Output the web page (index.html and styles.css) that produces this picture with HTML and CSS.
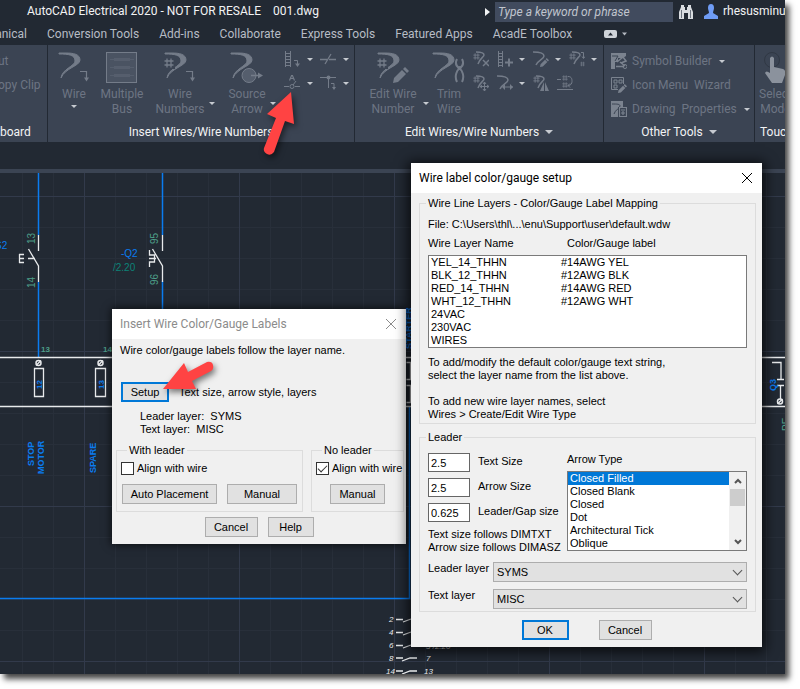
FILE: index.html
```html
<!DOCTYPE html>
<html lang="en">
<head>
<meta charset="utf-8">
<title>AutoCAD Electrical 2020</title>
<link rel="stylesheet" href="styles.css">
</head>
<body>
<svg class="defs" aria-hidden="true">
  <defs>
    <symbol id="wire" viewBox="0 0 32 32"><path d="M1 2h7c7 0 14 1 14 7 0 6-15 8-19 18 1-9 14-12 14-17 0-6-6-7-16-7z" fill="currentColor" stroke="currentColor" stroke-width="1"/></symbol>
    <symbol id="hash" viewBox="0 0 10 10"><path d="M3 .5v9M7 .5v9M.5 3h9M.5 7h9" fill="none" stroke="currentColor" stroke-width="1.3"/></symbol>
    <symbol id="pencil" viewBox="0 0 16 16"><path d="M0 16l1-5 8-8 4 4-8 8zM10 2l2-2 4 4-2 2z" fill="currentColor"/></symbol>
    <symbol id="down" viewBox="0 0 10 12"><path d="M0 1.500h6.500V8" fill="none" stroke="currentColor" stroke-width="1.200"/><path d="M4 7.500h5l-2.500 4z" fill="currentColor"/></symbol>
  </defs>
</svg>
<div class="app">
  <header class="titlebar">
    <span class="product">AutoCAD Electrical 2020 - NOT FOR RESALE</span>
    <span class="document">001.dwg</span>
    <span class="search-caret"></span>
    <input class="search" type="text" placeholder="Type a keyword or phrase" aria-label="Search">
    <svg class="binoculars" width="14" height="14" viewBox="0 0 14 14"><path d="M2 0h3v2h1v3h2V2h1V0h3v2l2 5v7H9V8H5v6H0V7l2-5z" fill="#d9dce0"/><path d="M2.500 5v8M11.500 5v8" stroke="#6d747f"/></svg>
    <svg class="avatar" width="14" height="15" viewBox="0 0 14 15"><path d="M4 4a3 4 0 0 1 6 0c0 2-1 3-1 5l5 3v3H0v-3l5-3C5 7 4 6 4 4z" fill="#6f9cf5"/></svg>
    <span class="user">rhesusminus</span>
  </header>
  <nav class="tabs">
    <a class="first" href="#mechanical">anical</a>
    <a href="#conversion">Conversion Tools</a>
    <a href="#addins">Add-ins</a>
    <a href="#collaborate">Collaborate</a>
    <a href="#express">Express Tools</a>
    <a href="#featured">Featured Apps</a>
    <a href="#acade">AcadE Toolbox</a>
    <button class="minimize" type="button" aria-label="Minimize ribbon"><svg width="23" height="8" viewBox="0 0 23 8"><rect width="13" height="8" rx="2" fill="#cfd3d9"/><path d="M4 5.500l2.500-3 2.500 3z" fill="#222933"/><path d="M18 2.500h5l-2.500 3z" fill="#b5bac2"/></svg></button>
  </nav>
  <section class="ribbon">
    <div class="panel clipboard">
      <div class="tools stack"><button type="button">ut</button><button type="button">opy Clip</button></div>
      <div class="panel-title">board</div>
    </div>
    <div class="panel insert">
      <div class="tools">
        <button class="big wire" type="button"><svg width="32" height="32" viewBox="0 0 32 32"><use href="#wire" width="32" height="32"/><use href="#down" x="22" y="19" width="10" height="12"/></svg><span>Wire</span><i class="caret"></i></button>
        <button class="big bus" type="button"><svg width="32" height="32" viewBox="0 0 32 32"><rect x=".5" y="1.500" width="30" height="30" fill="#4a5362" stroke="currentColor"/><path d="M8 8.500h16M8 16.500h16M8 24.500h16" stroke="#626b79" stroke-width="2"/><path d="M4 8.500h24M4 16.500h24M4 24.500h24" stroke="#555e6d"/></svg><span>Multiple<br>Bus</span></button>
        <button class="big numbers" type="button"><svg width="32" height="32" viewBox="0 0 32 32"><use href="#wire" width="32" height="32"/><rect y="6" width="11" height="12" fill="#3b4453"/><use href="#hash" y="7" width="10" height="10"/><use href="#down" x="22" y="19" width="10" height="12"/></svg><span>Wire<br>Numbers</span></button>
        <i class="caret low"></i>
        <button class="big source" type="button"><svg width="34" height="32" viewBox="0 0 34 32"><use href="#wire" width="32" height="32"/><circle cx="19" cy="24.500" r="7" fill="#555e6d" stroke="currentColor"/><path d="M21 24.500h9" stroke="currentColor" stroke-width="1.500"/><path d="M28 21.500l5 3-5 3z" fill="currentColor"/></svg><span>Source<br>Arrow</span></button>
        <i class="caret low"></i>
        <div class="small-grid insert-grid">
          <button type="button" aria-label="Ladder"><svg width="16" height="16" viewBox="0 0 16 16"><path d="M1.500 0v16M6.500 0v16M1 2.500h6M1 5.500h6M1 8.500h6M1 11.500h6M1 14.500h6" stroke="currentColor"/><path d="M10 9.500h3.500v4" fill="none" stroke="currentColor"/><path d="M11 12.500h5l-2.500 3.500z" fill="currentColor"/></svg></button><i class="caret"></i>
          <button type="button" aria-label="Wire gap"><svg width="16" height="16" viewBox="0 0 16 16"><path d="M0 8.500h7M9 8.500h7M5 13l6-10" stroke="currentColor" stroke-width="1.300"/></svg></button><i class="caret"></i>
          <button type="button" aria-label="Wire color labels"><svg width="16" height="16" viewBox="0 0 16 16"><path d="M5.500 5.500l2.500-6 2.500 6M6 3.500h4M0 11.500h5M11 11.500h5" fill="none" stroke="currentColor" stroke-width="1.200"/><circle cx="8" cy="11.500" r="2" fill="none" stroke="currentColor"/><path d="M9 10l3-4" stroke="currentColor"/></svg></button><i class="caret"></i>
          <button type="button" aria-label="Tee marker"><svg width="16" height="16" viewBox="0 0 16 16"><path d="M0 2.500h16M8.500 3v10M11 8.500h3v4" fill="none" stroke="currentColor"/><circle cx="8.500" cy="2.500" r="2" fill="currentColor"/><path d="M12 12h4l-2 3z" fill="currentColor"/></svg></button><i class="caret"></i>
        </div>
      </div>
      <div class="panel-title">Insert Wires/Wire Numbers</div>
    </div>
    <div class="panel edit">
      <div class="tools">
        <button class="big editnum" type="button"><svg width="32" height="32" viewBox="0 0 32 32"><use href="#wire" width="32" height="32"/><rect y="6" width="11" height="12" fill="#3b4453"/><use href="#hash" y="7" width="10" height="10"/><use href="#pencil" x="16" y="16" width="16" height="16"/></svg><span>Edit Wire<br>Number</span></button>
        <i class="caret low"></i>
        <button class="big trim" type="button"><svg width="34" height="32" viewBox="0 0 34 32"><use href="#wire" width="32" height="32"/><path d="M25 8c-2 4-1 7 2 9s6 8 3 14M30 8c2 4 1 7-2 9s-6 8-3 14" fill="none" stroke="currentColor" stroke-width="2"/><circle cx="27.500" cy="17" r="2" fill="currentColor"/></svg><span>Trim<br>Wire</span></button>
        <div class="edit-rows">
          <div class="small-row">
            <button type="button" aria-label="Delete wire numbers"><svg width="16" height="16" viewBox="0 0 16 16"><path d="M3 1c5 0 8 1 8 3s-4 3-6 9" fill="none" stroke="currentColor" stroke-width="1.500"/><use href="#hash" y="2" width="7" height="7"/><path d="M10 9l6 6M16 9l-6 6" stroke="currentColor" stroke-width="1.500"/></svg></button>
            <button class="gap" type="button" aria-label="Add rung"><svg width="16" height="16" viewBox="0 0 16 16"><path d="M1.500 0v16M5.500 0v16M1 2.500h5M1 5.500h5M1 8.500h5M1 11.500h5M1 14.500h5" stroke="currentColor"/><path d="M8 11.500h8M12 7.500v8" stroke="currentColor" stroke-width="2"/></svg></button><i class="caret"></i>
            <button class="gap" type="button" aria-label="Edit wire type"><svg width="16" height="16" viewBox="0 0 16 16"><path d="M0 1c8 0 11 1 11 4s-6 4-8 9" fill="none" stroke="currentColor" stroke-width="1.500"/><use href="#pencil" x="7" y="7" width="9" height="9"/></svg></button><i class="caret"></i>
            <button class="gap" type="button" aria-label="Copy wire number"><svg width="16" height="16" viewBox="0 0 16 16"><path d="M3 1c5 0 8 1 8 3s-4 3-6 9" fill="none" stroke="currentColor" stroke-width="1.500"/><use href="#hash" y="2" width="7" height="7"/><use href="#hash" x="11" y="10" width="5" height="6"/><path d="M12 1.500h2.500V7M13 5.500l1.500 2 1.500-2" fill="none" stroke="currentColor"/></svg></button><i class="caret"></i>
          </div>
          <div class="small-row">
            <button type="button" aria-label="Move wire number"><svg width="16" height="16" viewBox="0 0 16 16"><path d="M3 1c5 0 8 1 8 3s-4 3-6 9" fill="none" stroke="currentColor" stroke-width="1.500"/><use href="#hash" y="1" width="7" height="7"/><path d="M7 11.500h9M11.500 7v9M10 9l1.500-2L13 9M10 14l1.500 2 1.500-2M9 10l-2 1.500L9 13M14 10l2 1.500-2 1.500" fill="none" stroke="currentColor"/></svg></button>
            <button class="gap" type="button" aria-label="Stretch wire"><svg width="16" height="16" viewBox="0 0 16 16"><path d="M0 1c8 0 11 1 11 4s-6 4-8 9" fill="none" stroke="currentColor" stroke-width="1.500"/><path d="M6 12h10" stroke="currentColor"/><path d="M5 12l3-3v6zM16 12l-3-3v6z" fill="currentColor"/></svg></button><i class="caret"></i>
            <button class="gap" type="button" aria-label="Flip wire number"><svg width="16" height="16" viewBox="0 0 16 16"><path d="M3 1c5 0 8 1 8 3s-4 3-6 9" fill="none" stroke="currentColor" stroke-width="1.500"/><use href="#hash" y="1" width="7" height="7"/><path d="M11 7v9H7zM12 7v9h4z" fill="currentColor"/></svg></button>
            <button class="gap" type="button" aria-label="Toggle wire number"><svg width="16" height="16" viewBox="0 0 16 16"><path d="M0 4.500h4M0 14.500h16M11 1.500c4 0 4 3 4 5s-1 4-4 4M13 8.500l-2 2 2 2" fill="none" stroke="currentColor"/><use href="#hash" x="5" y="0" width="6" height="6"/><use href="#hash" x="5" y="7" width="6" height="6"/></svg></button>
          </div>
        </div>
      </div>
      <div class="panel-title">Edit Wires/Wire Numbers<i class="caret wide"></i></div>
    </div>
    <div class="panel other">
      <div class="tools stack">
        <button type="button"><svg width="16" height="16" viewBox="0 0 16 16"><path d="M0 0h15v3l-3 2H7v4H4v7H0z" fill="currentColor"/><path d="M1 3h6l-3 5" fill="none" stroke="#3b4453"/><path d="M6 9l6-5 3 4-5 2M5 13.500h8M9 9l5 4" fill="none" stroke="currentColor" stroke-width="1.500"/><circle cx="14" cy="13.500" r="2" fill="none" stroke="currentColor"/></svg>Symbol Builder<i class="caret"></i></button>
        <button type="button"><svg width="16" height="16" viewBox="0 0 16 16"><path d="M.5.5h12v12H.5zM3 3h3v3H3zM8 3h3v3H8zM3 8h3v3H3z" fill="none" stroke="currentColor"/><rect x="7" y="7" width="9" height="9" fill="#3b4453"/><use href="#pencil" x="7" y="7" width="9" height="9"/></svg>Icon Menu&nbsp; Wizard</button>
        <button type="button"><svg width="16" height="16" viewBox="0 0 16 16"><path d="M0 0h12v6H7v10H0z" fill="currentColor"/><path d="M1 3c5 0 8 0 8 2S4 9 3 13" fill="none" stroke="#3b4453"/><path d="M8.500 6.500h7v9h-7zM10 9h4M10 12h4M12 10v4" fill="none" stroke="currentColor" stroke-width="1.200"/></svg>Drawing&nbsp; Properties<i class="caret"></i></button>
      </div>
      <div class="panel-title">Other Tools<i class="caret wide"></i></div>
    </div>
    <div class="panel touch">
      <div class="tools"><button class="big select-mode" type="button"><svg width="32" height="32" viewBox="0 0 32 32"><circle cx="13" cy="9" r="7.500" fill="none" stroke="#303844"/><path d="M11 7q2-3 4 0v9l9 2q3 1 2 6l-3 8H13l-7-10q1-3 5 0z" fill="#8b929d"/></svg><span>Select<br>Mode</span></button></div>
      <div class="panel-title">Touch</div>
    </div>
  </section>
  <main class="workspace">
    <svg class="drawing" role="img" aria-label="Wiring schematic">
      <defs>
        <pattern id="minor" x="84" y="23" width="31" height="31" patternUnits="userSpaceOnUse"><path d="M.5 0v31M0 .5h31" stroke="#282f3a"/></pattern>
        <pattern id="major" x="84" y="23" width="155" height="155" patternUnits="userSpaceOnUse"><path d="M.5 0v155M0 .5h155" stroke="#323a4b"/></pattern>
      </defs>
      <rect width="100%" height="100%" fill="url(#minor)"/>
      <rect width="100%" height="100%" fill="url(#major)"/>
      <g transform="translate(0 -173)">
        <path class="blue" d="M38.500 173v62M38.500 282v75M162.500 173v62M162.500 281v40M0 598.500h410M409.500 406v193"/>
        <path class="white" d="M38.500 235v16M28.500 249l10 17v16M19.500 254v9M19 254.500h5M19 258.500h5M19 262.500h5M28 258.500h7M162.500 235v16M152.500 249l10 17v16M149.500 250v5h5v7h-5v5M149 258.500h7M0 357.500h785M0 406.500h785M34.500 368.500h9v28h-9zM95.500 368.500h10v28h-10zM406.500 362.500h4v17h-4M406.500 385.500h4v17h-4"/>
        <path class="white" d="M396 619.500h7M403 622l8-3M396 632.500h7M403 635l8-3M396 645.500h7M403 648l8-3M396 658h7M402 661l8-3h7M396 671h7M402 674l8-3h7M772 362.500h9v17M777 379.500h7M777 385.500h7M780.500 385v14"/>
        <g class="terminal"><circle cx="38.500" cy="363" r="2.500"/><circle cx="100.500" cy="363" r="2.500"/><circle cx="780" cy="401.500" r="2.500"/><path d="M36 365.500l5-5M98 365.500l5-5M777.500 404l5-5"/></g>
        <g class="cad blue-text">
          <text x="-5" y="249">S2</text><text x="121" y="257">-Q2</text>
          <text class="tiny" transform="translate(42 389) rotate(-90)">12</text><text class="tiny" transform="translate(104 389) rotate(-90)">13</text>
          <text class="narrow" transform="translate(34 466) rotate(-90)">STOP</text><text class="narrow" transform="translate(44 474) rotate(-90)">MOTOR</text><text class="narrow" transform="translate(96 473) rotate(-90)">SPARE</text>
          <text class="narrow" transform="translate(412 349) rotate(-90)">STARTER</text><text class="narrow" transform="translate(776 391) rotate(-90)">Q3</text>
        </g>
        <g class="cad green-text">
          <text class="deep" x="113" y="271">/2.20</text>
          <text transform="translate(35 244) rotate(-90)">13</text><text transform="translate(35 288) rotate(-90)">14</text>
          <text transform="translate(158 244) rotate(-90)">95</text><text transform="translate(158 285) rotate(-90)">96</text>
          <text class="tiny" x="41" y="352">13</text><text class="tiny" x="103" y="352">14</text><text transform="translate(790 431) rotate(-90)">PE</text>
        </g>
        <g class="cad white-text">
          <text x="389" y="622">2</text><text x="389" y="635">4</text><text x="389" y="648">6</text><text x="389" y="661">8</text><text x="386" y="674">14</text>
          <text x="426" y="649">5 /2.20</text><text x="426" y="661">7</text><text x="424" y="674">13</text>
        </g>
      </g>
    </svg>
  </main>

  <section class="dialog labels-dialog" role="dialog" aria-labelledby="labels-title">
    <header class="dialog-bar"><h2 id="labels-title">Insert Wire Color/Gauge Labels</h2><button class="close" type="button" aria-label="Close"><svg width="12" height="12" viewBox="0 0 12 12"><path d="M1 1l10 10M11 1L1 11" stroke="currentColor"/></svg></button></header>
    <form class="labels-body">
      <p>Wire color/gauge labels follow the layer name.</p>
      <div class="setup-row"><button class="btn primary" type="button">Setup</button><span>Text size, arrow style, layers</span></div>
      <p class="layers">Leader layer:&nbsp; SYMS<br>Text layer:&nbsp; MISC</p>
      <div class="groups">
        <fieldset class="with-leader"><legend>With leader</legend>
          <label class="check"><input type="checkbox">Align with wire</label>
          <div class="buttons"><button class="btn auto" type="button">Auto Placement</button><button class="btn manual" type="button">Manual</button></div>
        </fieldset>
        <fieldset class="no-leader"><legend>No leader</legend>
          <label class="check"><input type="checkbox" checked>Align with wire</label>
          <div class="buttons"><button class="btn" type="button">Manual</button></div>
        </fieldset>
      </div>
      <div class="actions"><button class="btn" type="button">Cancel</button><button class="btn help" type="button">Help</button></div>
    </form>
  </section>

  <section class="dialog setup-dialog" role="dialog" aria-labelledby="setup-title">
    <header class="dialog-bar"><h2 id="setup-title">Wire label color/gauge setup</h2><button class="close" type="button" aria-label="Close"><svg width="12" height="12" viewBox="0 0 12 12"><path d="M1 1l10 10M11 1L1 11" stroke="currentColor"/></svg></button></header>
    <form class="setup-body">
      <fieldset class="mapping"><legend>Wire Line Layers - Color/Gauge Label Mapping</legend>
        <p>File: C:\Users\thl\...\enu\Support\user\default.wdw</p>
        <table>
          <thead><tr><th>Wire Layer Name</th><th>Color/Gauge label</th></tr></thead>
          <tbody>
            <tr><td>YEL_14_THHN</td><td>#14AWG YEL</td></tr>
            <tr><td>BLK_12_THHN</td><td>#12AWG BLK</td></tr>
            <tr><td>RED_14_THHN</td><td>#14AWG RED</td></tr>
            <tr><td>WHT_12_THHN</td><td>#12AWG WHT</td></tr>
            <tr><td>24VAC</td><td></td></tr>
            <tr><td>230VAC</td><td></td></tr>
            <tr><td>WIRES</td><td></td></tr>
          </tbody>
        </table>
        <p class="hint">To add/modify the default color/gauge text string,<br>select the layer name from the list above.</p>
        <p class="hint">To add new wire layer names, select<br>Wires &gt; Create/Edit Wire Type</p>
      </fieldset>
      <fieldset class="leader"><legend>Leader</legend>
        <div class="leader-top">
          <div class="sizes">
            <div class="size"><input id="text-size" type="text" value="2.5"><label for="text-size">Text Size</label></div>
            <div class="size"><input id="arrow-size" type="text" value="2.5"><label for="arrow-size">Arrow Size</label></div>
            <div class="size"><input id="gap-size" type="text" value="0.625"><label for="gap-size">Leader/Gap size</label></div>
            <p>Text size follows DIMTXT<br>Arrow size follows DIMASZ</p>
          </div>
          <div class="arrow-type">
            <label for="arrow-type">Arrow Type</label>
            <div class="listbox">
              <select id="arrow-type" size="6"><option selected>Closed Filled</option><option>Closed Blank</option><option>Closed</option><option>Dot</option><option>Architectural Tick</option><option>Oblique</option></select>
              <div class="scrollbar"><svg width="8" height="6" viewBox="0 0 8 6"><path d="M1 5l3-3 3 3" fill="none" stroke="#555" stroke-width="2"/></svg><i></i><svg width="8" height="6" viewBox="0 0 8 6"><path d="M1 1l3 3 3-3" fill="none" stroke="#555" stroke-width="2"/></svg></div>
            </div>
          </div>
        </div>
        <div class="layer-row"><label for="leader-layer">Leader layer</label><span class="dropdown"><select id="leader-layer"><option>SYMS</option></select></span></div>
        <div class="layer-row"><label for="text-layer">Text layer</label><span class="dropdown"><select id="text-layer"><option>MISC</option></select></span></div>
      </fieldset>
      <div class="actions"><button class="btn primary ok" type="button">OK</button><button class="btn" type="button">Cancel</button></div>
    </form>
  </section>

  <svg class="pointer ribbon-pointer" width="44" height="76" viewBox="260 86 44 76" aria-hidden="true"><path d="M291 92l3 32-9-3-11 31q-3 4-7 2t-3-6l12-30-9-4z"/></svg>
  <svg class="pointer setup-pointer" width="60" height="42" viewBox="160 356 60 42" aria-hidden="true"><path d="M163 389l21-26 4 9 19-10q5-1 6 3t-2 6l-19 10 4 8z"/></svg>
</div>
</body>
</html>
```

FILE: styles.css
```css
* { box-sizing: border-box; }

:root {
  --dark: #222933;
  --panel: #3b4453;
  --disabled: #6d7583;
  --ui: Roboto, "Open Sans", sans-serif;
  --classic: "Liberation Sans", Arial, sans-serif;
}

body {
  margin: 0;
  min-height: 100vh;
  padding: 0 15px 15px 0;
  display: flex;
  background: #fff;
  font: 12px/15px var(--ui);
}

button, input, select { font: inherit; color: inherit; margin: 0; padding: 0; border: 0; border-radius: 0; background: none; }
p, h2 { margin: 0; font-size: inherit; font-weight: normal; }
.defs { position: absolute; width: 0; height: 0; }

.app {
  position: relative;
  flex: 1;
  min-width: 0;
  display: flex;
  flex-direction: column;
  background: var(--dark);
  color: #e6e8eb;
  box-shadow: 4px 5px 6px #444;
}

/* Title bar */
.titlebar { display: flex; align-items: center; height: 23px; padding-left: 27px; overflow: hidden; white-space: nowrap; color: #f2f3f4; }
.document { margin-left: 12px; flex: 1; }
.search-caret { border: 4px solid transparent; border-left: 5px solid #f2f3f4; border-right: 0; margin-right: 5px; }
.search { width: 178px; height: 20px; padding-left: 3px; background: #414b5e; }
.search::placeholder { color: #c0c5ce; font-style: italic; opacity: 1; }
.binoculars { margin-left: 6px; }
.avatar { margin: 0 5px 0 11px; }
.user { width: 62px; overflow: hidden; }

/* Ribbon tabs */
.tabs { display: flex; align-items: center; gap: 20px; height: 22px; color: #b7bcc5; white-space: nowrap; }
.tabs a { color: inherit; text-decoration: none; }
.tabs .first { display: flex; justify-content: flex-end; width: 27px; }
.minimize { display: flex; margin-left: 12px; }

/* Ribbon */
.ribbon { display: flex; gap: 1px; height: 97px; overflow: hidden; color: var(--disabled); white-space: nowrap; }
.panel { display: flex; flex-direction: column; flex: none; background: var(--panel); overflow: hidden; }
.panel button { text-align: center; }
.clipboard { width: 47px; }
.insert { width: 306px; }
.edit { width: 248px; }
.other { width: 150px; }
.touch { flex: 1; }
.tools { display: flex; flex: 1; align-items: flex-start; padding-top: 6px; }
.panel-title { display: flex; align-items: center; justify-content: center; height: 20px; color: #f2f3f4; }
.clipboard .panel-title { justify-content: flex-start; }
.touch .panel-title { justify-content: flex-start; padding-left: 5px; }

.caret { flex: none; display: block; border: 3px solid transparent; border-top: 3px solid #c6cad0; border-bottom: 0; }
.caret.low { margin-top: 51px; }
.caret.wide { border-width: 4px; border-bottom: 0; margin-left: 6px; }

.big { display: flex; flex-direction: column; align-items: center; flex: none; }
.big svg { margin-bottom: 4px; color: #747c89; }
.big .caret { margin-top: 3px; }
.wire { width: 52px; }
.bus { width: 44px; }
.numbers { width: 64px; margin-left: 4px; }
.insert .numbers + .caret { margin-left: -3px; }
.source { width: 50px; margin-left: 7px; }
.insert .source + .caret { margin-left: -2px; }
.editnum { width: 60px; margin-left: 8px; }
.trim { width: 38px; margin-left: 1px; }
.select-mode { margin-left: 4px; }

.small-grid { display: grid; grid-template-columns: 16px 6px 16px 6px; column-gap: 7px; row-gap: 8px; align-items: center; margin-left: 8px; }
.small-grid svg, .small-row svg { display: block; color: #747c89; }
.edit-rows { display: grid; row-gap: 8px; margin-left: 5px; }
.small-row { display: flex; align-items: center; }
.small-row .gap { margin-left: 8px; }
.small-row .caret { margin-left: 6px; }
.small-row .caret + .gap { margin-left: 8px; }

.stack { flex-direction: column; gap: 8px; padding-top: 8px; }
.stack button { display: flex; align-items: center; height: 16px; }
.clipboard .stack { margin-left: -2px; }
.other .stack { padding-left: 7px; }
.other .stack svg { margin-right: 5px; color: #7b838f; }
.other .stack .caret { margin-left: 7px; }

/* Drawing area */
.workspace { flex: 1; display: flex; margin-top: 27px; border-top: 4px solid var(--panel); overflow: hidden; }
.drawing { width: 100%; flex: 1; }
.blue { fill: none; stroke: #0a7cf0; stroke-width: 1.5; }
.white { fill: none; stroke: #e8eaec; stroke-width: 1.3; }
.terminal { fill: none; stroke: #e8eaec; stroke-width: 1.5; }
.cad { font: 10px "Liberation Sans", sans-serif; }
.tiny { font-size: 8px; font-weight: bold; }
.narrow { font-size: 9px; font-weight: bold; }
.blue-text { fill: #0a7cf0; }
.green-text { fill: #4d9e88; }
.green-text .deep { fill: #0c8378; }
.white-text { fill: #e8eaec; font-size: 8px; font-style: italic; }

/* Dialogs */
.dialog { position: absolute; background: #f0f0f0; color: #000; font: 11px/13px var(--classic); box-shadow: 0 0 8px 1px #000a; white-space: nowrap; }
.labels-dialog { left: 112px; top: 309px; width: 294px; }
.setup-dialog { left: 411px; top: 163px; width: 351px; box-shadow: 0 2px 12px 3px #000b; }
.dialog-bar { display: flex; align-items: center; justify-content: space-between; height: 30px; padding: 0 9px 0 8px; background: #fff; font: 12px/15px var(--ui); }
.labels-dialog .dialog-bar { color: #8b8b8b; }
.close { display: flex; }

.btn { height: 20px; min-width: 53px; border: 1px solid #adadad; background: #e1e1e1; }
.btn.primary { border: 2px solid #0078d7; }
.actions { display: flex; justify-content: center; }
fieldset { margin: 0; min-width: 0; padding: 0; border: 1px solid #dcdcdc; }
legend { margin-left: 6px; padding: 0 2px; }

.labels-body { padding: 5px 2px 7px 4px; }
.labels-body > p { margin-left: 4px; }
.setup-row { display: flex; align-items: center; gap: 10px; margin: 25px 0 0 5px; }
.setup-row .btn { min-width: 48px; }
.labels-body .layers { margin: 8px 0 8px 24px; }
.groups { display: flex; justify-content: space-between; }
.with-leader { width: 187px; }
.no-leader { width: 93px; }
.groups fieldset { padding: 5px 4px 7px; }
.check { display: flex; align-items: center; gap: 3px; }
.check input { appearance: none; flex: none; width: 13px; height: 13px; border: 1px solid #333; background: #fff; display: grid; place-items: center; }
.check input:checked::before { content: ""; width: 8px; height: 4px; border: solid #333; border-width: 0 0 1px 1px; transform: translateY(-1px) rotate(-45deg); }
.buttons { display: flex; justify-content: center; gap: 10px; margin-top: 9px; }
.auto { width: 95px; }
.manual { width: 70px; }
.no-leader .btn { width: 55px; }
.labels-body .actions { gap: 10px; margin-top: 5px; padding-right: 2px; }
.help { min-width: 46px; }

.setup-body { padding: 4px 6px 7px 8px; }
.mapping { padding: 8px 8px 2px; height: 227px; }
.mapping legend { margin-left: -2px; }
table { width: 100%; margin-top: 6px; border-collapse: collapse; table-layout: fixed; }
th { padding: 0 0 5px; text-align: left; font-weight: normal; }
th:first-child { width: 133px; }
th + th { padding-left: 6px; }
tbody { outline: 1px solid #7a7a7a; outline-offset: -1px; background: #fff; }
td { padding: 0; height: 13px; }
td:first-child { padding-left: 3px; }
tbody tr:first-child td { padding-top: 1px; }
tbody tr:last-child td { padding-bottom: 1px; }
.hint { margin: 8px 0 13px; }
.hint + .hint { margin: 0; }

.leader { margin-top: 7px; padding: 9px 8px 2px; }
.leader legend { margin-left: -2px; }
.leader-top { display: flex; justify-content: space-between; }
.size { display: flex; align-items: flex-start; gap: 8px; margin-bottom: 6px; line-height: 17px; }
.size input { width: 42px; height: 19px; padding-left: 2px; border: 1px solid #666; background: #fff; }
.arrow-type { width: 180px; }
.arrow-type label { display: block; margin-bottom: 5px; }
.listbox { display: flex; height: 80px; border: 1px solid #7a7a7a; background: #fff; }
.listbox select { flex: 1; height: 78px; overflow: hidden; outline: 0; }
.listbox option { min-height: 13px; height: 13px; padding: 0 2px; color: #000; }
.listbox option:checked { background: linear-gradient(#0078d7, #0078d7); color: #fff; }
.scrollbar { display: flex; flex-direction: column; align-items: center; width: 17px; padding: 6px 0 5px; background: #f0f0f0; }
.scrollbar i { width: 15px; height: 17px; margin: 5px 0 auto; background: #cdcdcd; }
.layer-row { display: flex; justify-content: space-between; margin-top: 7px; }
.leader-top + .layer-row { margin-top: 8px; }
.dropdown { position: relative; display: flex; width: 254px; height: 20px; }
.dropdown::after { content: ""; position: absolute; right: 6px; top: 5px; width: 6px; height: 6px; border: solid #555; border-width: 0 1px 1px 0; transform: rotate(45deg); pointer-events: none; }
.dropdown select { appearance: none; width: 100%; padding: 0 3px; border: 1px solid #adadad; background: #e1e1e1; }
.setup-body .actions { gap: 30px; margin-top: 8px; padding-right: 2px; }
.ok { width: 47px; min-width: 47px; }

/* Call-out arrows */
.pointer { position: absolute; fill: #ff4343; overflow: visible; filter: drop-shadow(2px 3px 3px #0008); }
.ribbon-pointer { left: 260px; top: 86px; }
.setup-pointer { left: 160px; top: 356px; }
```
